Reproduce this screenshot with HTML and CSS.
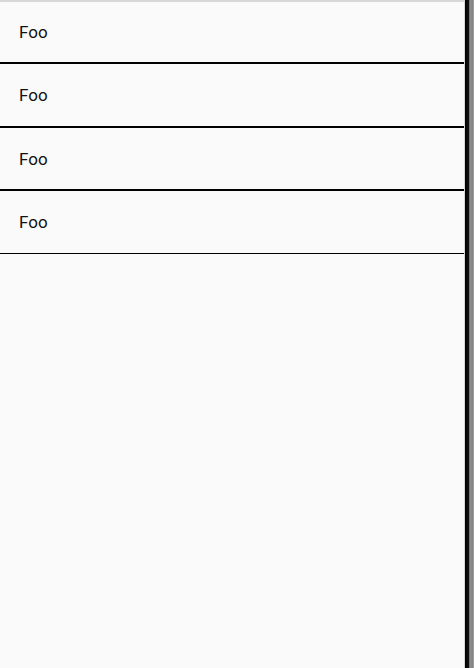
FILE: index.html
```html
<!DOCTYPE html>
<html>
<head>
<meta charset="utf-8">
<link rel="stylesheet" href="styles.css">
</head>
<body>
<div class="page">
  <div class="content">
    <div class="topline"></div>
    <ul class="list">
      <li class="item">Foo</li>
      <li class="item">Foo</li>
      <li class="item">Foo</li>
      <li class="item last">Foo</li>
    </ul>
  </div>
  <div class="edge"></div>
</div>
</body>
</html>
```
FILE: styles.css
```css
html, body {
  margin: 0;
  padding: 0;
  height: 100%;
  background: #fafafa;
}
.page {
  display: flex;
  height: 668px;
  width: 474px;
}
.content {
  flex: 1;
  border-right: 1px solid #d8d8d8;
}
.topline {
  height: 2px;
  background: #d6d6d6;
}
.list {
  list-style: none;
  margin: 0;
  padding: 0;
}
.item {
  height: 61px;
  display: flex;
  align-items: center;
  padding-left: 19px;
  padding-top: 0.66px;
  border-bottom: 2px solid #000;
  font-family: Roboto, "Noto Sans", sans-serif;
  font-size: 17px;
  color: #111;
}
.item:first-child {
  height: 60px;
  padding-top: 0;
}
.item.last {
  border-bottom: 1.5px solid #000;
}
.edge {
  width: 9px;
  background: linear-gradient(to right, #000 0, #111 44%, #666 44%, #999 66%, #777 78%, #aaa 100%);
}
```
